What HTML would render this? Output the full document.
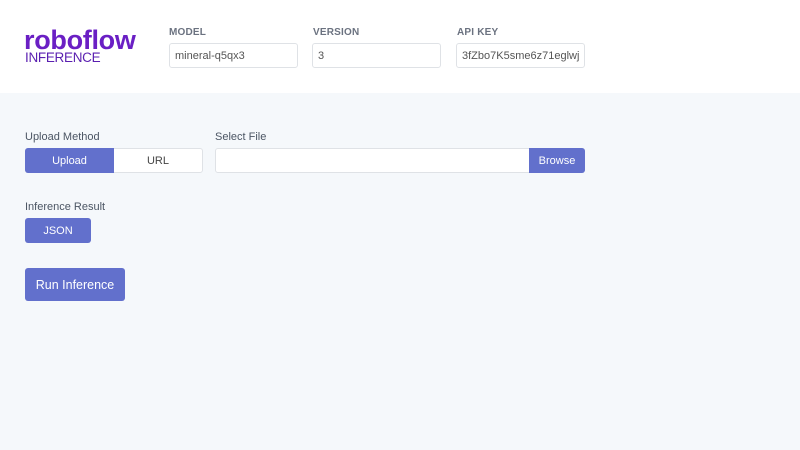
<!DOCTYPE html>
<html><head><meta charset="utf-8"><style>
*{box-sizing:border-box;margin:0;padding:0}
body{width:800px;height:450px;background:#f5f8fb;font-family:"Liberation Sans",sans-serif;position:relative;overflow:hidden}
.hdr{position:absolute;left:0;top:0;width:800px;height:93px;background:#fff}
.logo{position:absolute;left:24px;top:25px;color:#6a1fc4;font-weight:bold;font-size:27px;letter-spacing:-0.3px;line-height:30px}
.sub{position:absolute;left:25px;top:50px;color:#5a1fb0;font-size:13.5px;letter-spacing:-0.3px;line-height:16px}
.lbl{position:absolute;font-size:10px;color:#6b7280;top:27px;font-weight:bold;letter-spacing:.2px}
.inp{position:absolute;top:43px;height:25px;background:#fff;border:1px solid #dfe2e6;border-radius:3px;font-size:11px;color:#555;padding:6px 5px;line-height:12px}
.l2{position:absolute;font-size:11px;color:#4b5563}
.btn{position:absolute;background:#6270cc;color:#fff;font-size:11px;text-align:center;border-radius:3px}
</style></head><body>
<div class="hdr">
<div class="logo">roboflow</div>
<div class="sub">INFERENCE</div>
<div class="lbl" style="left:169px">MODEL</div>
<div class="inp" style="left:169px;width:129px">mineral-q5qx3</div>
<div class="lbl" style="left:313px">VERSION</div>
<div class="inp" style="left:312px;width:129px">3</div>
<div class="lbl" style="left:457px">API KEY</div>
<div class="inp" style="left:456px;width:129px">3fZbo7K5sme6z71eglwj</div>
</div>
<div class="l2" style="left:25px;top:131px">Upload Method</div>
<div class="l2" style="left:215px;top:131px">Select File</div>
<div style="position:absolute;left:25px;top:148px;width:178px;height:25px;background:#fff;border:1px solid #dfe2e6;border-radius:3px"></div>
<div class="btn" style="left:25px;top:148px;width:89px;height:25px;line-height:27px;border-radius:3px 0 0 3px">Upload</div>
<div style="position:absolute;left:114px;top:148px;width:88px;height:25px;line-height:27px;text-align:center;font-size:11px;color:#444">URL</div>
<div style="position:absolute;left:215px;top:148px;width:370px;height:25px;background:#fff;border:1px solid #dfe2e6;border-radius:3px"></div>
<div class="btn" style="left:529px;top:148px;width:56px;height:25px;line-height:27px;border-radius:0 3px 3px 0">Browse</div>
<div class="l2" style="left:25px;top:201px">Inference Result</div>
<div class="btn" style="left:25px;top:218px;width:66px;height:25px;line-height:27px">JSON</div>
<div class="btn" style="left:25px;top:268px;width:100px;height:33px;line-height:35px;font-size:12.5px">Run Inference</div>
</body></html>
